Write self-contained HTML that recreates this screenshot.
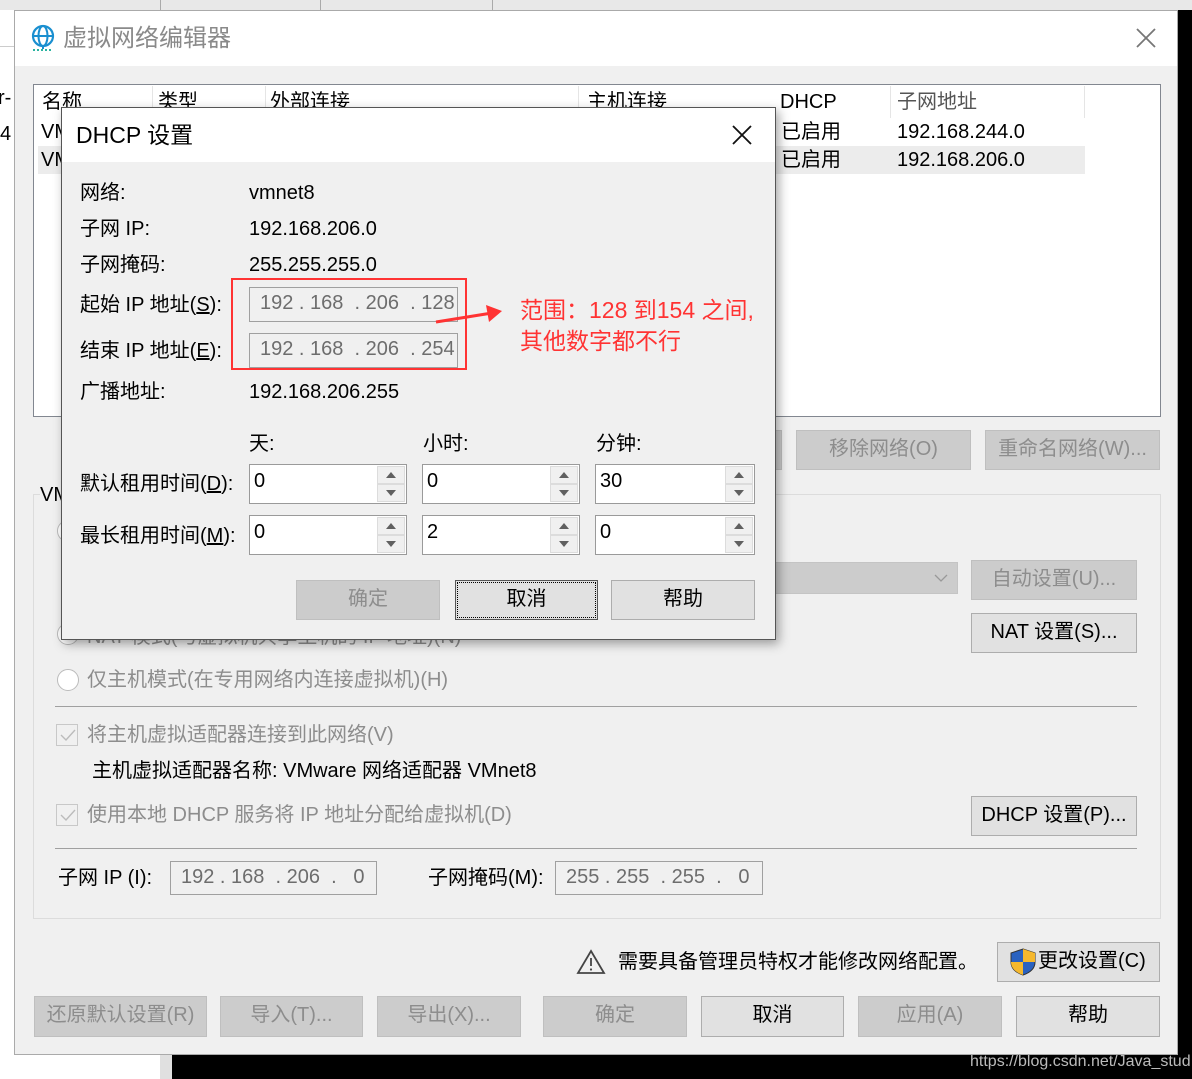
<!DOCTYPE html>
<html><head><meta charset="utf-8">
<style>
*{margin:0;padding:0;box-sizing:border-box}
body{width:1192px;height:1079px;position:relative;overflow:hidden;background:#f0f0f0;font-family:"Liberation Sans","Noto Sans CJK SC",sans-serif;font-size:20px;color:#000}
.a{position:absolute}
.t{position:absolute;line-height:24px;white-space:nowrap}
.btn{position:absolute;background:#e1e1e1;border:1px solid #adadad;text-align:center;line-height:37px;font-size:20px;white-space:nowrap}
.dis{background:#cccccc;border-color:#bfbfbf;color:#8d8d8d}
.g{color:#8d8d8d}
.ip{position:absolute;background:#f0f0f0;border:1px solid #a0a0a0;color:#6d6d6d;font-size:20px;line-height:30px;white-space:pre;padding-left:10px}
.spin{position:absolute;background:#fff;border:1px solid #9a9a9a;height:40px;width:158px}
.spin span{position:absolute;left:4px;top:4px;font-size:20px;line-height:24px}
.sb{position:absolute;right:1px;width:28px;height:18px;background:#f0f0f0;border:1px solid #dcdcdc}
.sb:before{content:"";position:absolute;left:8px;top:5px;border-left:5px solid transparent;border-right:5px solid transparent}
.up:before{border-bottom:6px solid #606060}
.dn:before{border-top:6px solid #606060}
.chk{position:absolute;width:22px;height:22px;border:1px solid #c8c8c8;background:#f0f0f0}
</style></head><body>
<div class="a" style="left:0;top:0;width:1192px;height:10px;background:#e8e8e8"></div>
<div class="a" style="left:160px;top:0;width:1px;height:10px;background:#aaa"></div>
<div class="a" style="left:320px;top:0;width:1px;height:10px;background:#aaa"></div>
<div class="a" style="left:492px;top:0;width:1px;height:10px;background:#aaa"></div>
<div class="a" style="left:0;top:10px;width:14px;height:1050px;background:#fff"></div>
<div class="a" style="left:0;top:46px;width:14px;height:1px;background:#ccc"></div>
<div class="t" style="left:-2px;top:86px;font-size:20px">r-</div>
<div class="t" style="left:0;top:122px;font-size:20px">4</div>
<div class="a" style="left:1178px;top:10px;width:14px;height:1069px;background:#000"></div>
<div class="a" style="left:0;top:1055px;width:160px;height:24px;background:#fff"></div>
<div class="a" style="left:160px;top:1055px;width:12px;height:24px;background:#e0e0e0"></div>
<div class="a" style="left:172px;top:1055px;width:1020px;height:24px;background:#000"></div>
<div class="t" style="left:970px;top:1050px;color:#bbb;font-size:16px">https://blog.csdn.net/Java_stud</div>

<div class="a" style="left:14px;top:10px;width:1164px;height:1045px;background:#f0f0f0;border:1px solid #aaa"></div>
<div class="a" style="left:15px;top:11px;width:1162px;height:55px;background:#fff"></div>
<svg class="a" style="left:30px;top:24px" width="26" height="28" viewBox="0 0 26 28"><circle cx="13" cy="12" r="10" fill="none" stroke="#1a8fd0" stroke-width="2.2"/><ellipse cx="13" cy="12" rx="4.5" ry="10" fill="none" stroke="#1a8fd0" stroke-width="2"/><line x1="3" y1="12" x2="23" y2="12" stroke="#1a8fd0" stroke-width="2"/><line x1="13" y1="22" x2="13" y2="25" stroke="#1a8fd0" stroke-width="2"/><line x1="3" y1="26" x2="23" y2="26" stroke="#2bb3a0" stroke-width="2" stroke-dasharray="2 2"/></svg>
<div class="t" style="left:63px;top:25px;font-size:24px;line-height:28px;color:#8a8a8a">虚拟网络编辑器</div>
<svg class="a" style="left:1135px;top:27px" width="22" height="22"><path d="M2 2L20 20M20 2L2 20" stroke="#777" stroke-width="1.8"/></svg>

<div class="a" style="left:33px;top:84px;width:1128px;height:333px;background:#fff;border:1px solid #828790"></div>
<div class="a" style="left:152px;top:86px;width:1px;height:32px;background:#e5e5e5"></div>
<div class="a" style="left:265px;top:86px;width:1px;height:32px;background:#e5e5e5"></div>
<div class="a" style="left:578px;top:86px;width:1px;height:32px;background:#e5e5e5"></div>
<div class="a" style="left:890px;top:86px;width:1px;height:32px;background:#e5e5e5"></div>
<div class="a" style="left:1084px;top:86px;width:1px;height:32px;background:#e5e5e5"></div>
<div class="t" style="left:42px;top:90px">名称</div>
<div class="t" style="left:158px;top:90px">类型</div>
<div class="t" style="left:270px;top:90px">外部连接</div>
<div class="t" style="left:587px;top:90px">主机连接</div>
<div class="t" style="left:780px;top:90px">DHCP</div>
<div class="t" style="left:897px;top:90px;color:#555">子网地址</div>
<div class="a" style="left:38px;top:146px;width:1047px;height:28px;background:#ececec"></div>
<div class="t" style="left:41px;top:120px">VM</div>
<div class="t" style="left:41px;top:148px">VM</div>
<div class="t" style="left:781px;top:120px">已启用</div>
<div class="t" style="left:897px;top:120px">192.168.244.0</div>
<div class="t" style="left:781px;top:148px">已启用</div>
<div class="t" style="left:897px;top:148px">192.168.206.0</div>

<div class="btn dis" style="left:700px;top:430px;width:82px;height:40px"></div>
<div class="btn dis" style="left:796px;top:430px;width:175px;height:40px">移除网络(O)</div>
<div class="btn dis" style="left:985px;top:430px;width:175px;height:40px">重命名网络(W)...</div>

<div class="a" style="left:33px;top:494px;width:1128px;height:425px;border:1px solid #dcdcdc"></div>
<div class="t" style="left:40px;top:483px;background:#f0f0f0">VM</div>
<div class="a" style="left:57px;top:520px;width:22px;height:22px;border-radius:50%;border:1px solid #bbb;background:#fff"></div>
<div class="a" style="left:700px;top:562px;width:258px;height:32px;background:#cccccc;border:1px solid #c4c4c4"></div>
<svg class="a" style="left:934px;top:573px" width="14" height="10"><path d="M1 2L7 8L13 2" fill="none" stroke="#999" stroke-width="1.3"/></svg>
<div class="btn dis" style="left:971px;top:560px;width:166px;height:40px">自动设置(U)...</div>
<div class="btn" style="left:971px;top:613px;width:166px;height:40px">NAT 设置(S)...</div>
<div class="a" style="left:57px;top:623px;width:22px;height:22px;border-radius:50%;border:1px solid #bbb;background:#fff"></div>
<div class="t g" style="left:87px;top:625px">NAT 模式(与虚拟机共享主机的 IP 地址)(N)</div>
<div class="a" style="left:57px;top:669px;width:22px;height:22px;border-radius:50%;border:1px solid #bbb;background:#fff"></div>
<div class="t g" style="left:87px;top:668px">仅主机模式(在专用网络内连接虚拟机)(H)</div>
<div class="a" style="left:55px;top:706px;width:1082px;height:1px;background:#a0a0a0"></div>
<div class="chk" style="left:56px;top:724px"></div>
<svg class="a" style="left:59px;top:727px" width="18" height="16"><path d="M2 8L7 13L16 3" fill="none" stroke="#bbb" stroke-width="1.4"/></svg>
<div class="t g" style="left:87px;top:723px">将主机虚拟适配器连接到此网络(V)</div>
<div class="t" style="left:92px;top:759px">主机虚拟适配器名称: VMware 网络适配器 VMnet8</div>
<div class="chk" style="left:56px;top:804px"></div>
<svg class="a" style="left:59px;top:807px" width="18" height="16"><path d="M2 8L7 13L16 3" fill="none" stroke="#bbb" stroke-width="1.4"/></svg>
<div class="t g" style="left:87px;top:803px">使用本地 DHCP 服务将 IP 地址分配给虚拟机(D)</div>
<div class="btn" style="left:971px;top:796px;width:166px;height:40px">DHCP 设置(P)...</div>
<div class="a" style="left:55px;top:848px;width:1082px;height:1px;background:#a0a0a0"></div>
<div class="t" style="left:58px;top:866px">子网 IP (I):</div>
<div class="ip" style="left:170px;top:861px;width:207px;height:34px">192 . 168  . 206  .   0</div>
<div class="t" style="left:428px;top:866px">子网掩码(M):</div>
<div class="ip" style="left:555px;top:861px;width:208px;height:34px">255 . 255  . 255  .   0</div>

<svg class="a" style="left:576px;top:949px" width="30" height="26"><path d="M15 2L28 24H2Z" fill="none" stroke="#444" stroke-width="1.8"/><line x1="15" y1="9" x2="15" y2="17" stroke="#444" stroke-width="1.8"/><circle cx="15" cy="20.5" r="1.1" fill="#444"/></svg>
<div class="t" style="left:618px;top:950px">需要具备管理员特权才能修改网络配置。</div>
<div class="btn" style="left:997px;top:942px;width:163px;height:40px;text-align:left;padding-left:40px">更改设置(C)</div>
<svg class="a" style="left:1008px;top:947px" width="30" height="30" viewBox="0 0 30 30"><path d="M15 2L27 6V15C27 22 21 26 15 28C9 26 3 22 3 15V6Z" fill="#2a62c0" stroke="#333" stroke-width="1"/><path d="M15 2L27 6V15H15Z" fill="#f5b82e"/><path d="M15 15H3C3 22 9 26 15 28Z" fill="#f5b82e"/></svg>

<div class="btn dis" style="left:34px;top:996px;width:173px;height:41px">还原默认设置(R)</div>
<div class="btn dis" style="left:220px;top:996px;width:143px;height:41px">导入(T)...</div>
<div class="btn dis" style="left:377px;top:996px;width:144px;height:41px">导出(X)...</div>
<div class="btn dis" style="left:543px;top:996px;width:144px;height:41px">确定</div>
<div class="btn" style="left:701px;top:996px;width:143px;height:41px">取消</div>
<div class="btn dis" style="left:858px;top:996px;width:144px;height:41px">应用(A)</div>
<div class="btn" style="left:1016px;top:996px;width:144px;height:41px">帮助</div>

<div class="a" style="left:61px;top:107px;width:715px;height:533px;background:#f0f0f0;border:1px solid #555;box-shadow:3px 4px 10px rgba(0,0,0,.35)"></div>
<div class="a" style="left:62px;top:108px;width:713px;height:54px;background:#fff"></div>
<div class="t" style="left:76px;top:120px;font-size:23px;line-height:30px">DHCP 设置</div>
<svg class="a" style="left:731px;top:124px" width="22" height="22"><path d="M2 2L20 20M20 2L2 20" stroke="#111" stroke-width="1.8"/></svg>
<div class="t" style="left:80px;top:181px">网络:</div>
<div class="t" style="left:249px;top:181px">vmnet8</div>
<div class="t" style="left:80px;top:217px">子网 IP:</div>
<div class="t" style="left:249px;top:217px">192.168.206.0</div>
<div class="t" style="left:80px;top:253px">子网掩码:</div>
<div class="t" style="left:249px;top:253px">255.255.255.0</div>
<div class="t" style="left:80px;top:293px">起始 IP 地址(<u>S</u>):</div>
<div class="t" style="left:80px;top:339px">结束 IP 地址(<u>E</u>):</div>
<div class="ip" style="left:249px;top:287px;width:209px;height:35px">192 . 168  . 206  . 128</div>
<div class="ip" style="left:249px;top:333px;width:209px;height:35px">192 . 168  . 206  . 254</div>
<div class="a" style="left:231px;top:278px;width:236px;height:92px;border:2px solid #f33"></div>
<svg class="a" style="left:430px;top:300px" width="80" height="30"><path d="M6 22L62 13" stroke="#f33" stroke-width="3"/><path d="M56 5L72 11L59 22Z" fill="#f33"/></svg>
<div class="t" style="left:520px;top:296px;color:#f33;font-size:23px;line-height:28px">范围：128 到154 之间,</div>
<div class="t" style="left:520px;top:327px;color:#f33;font-size:23px;line-height:28px">其他数字都不行</div>
<div class="t" style="left:80px;top:380px">广播地址:</div>
<div class="t" style="left:249px;top:380px">192.168.206.255</div>

<div class="t" style="left:249px;top:432px">天:</div>
<div class="t" style="left:423px;top:432px">小时:</div>
<div class="t" style="left:596px;top:432px">分钟:</div>
<div class="t" style="left:80px;top:472px">默认租用时间(<u>D</u>):</div>
<div class="t" style="left:80px;top:524px">最长租用时间(<u>M</u>):</div>
<div class="spin" style="left:249px;top:464px"><span>0</span><div class="sb up" style="top:1px"></div><div class="sb dn" style="top:19px"></div></div>
<div class="spin" style="left:422px;top:464px"><span>0</span><div class="sb up" style="top:1px"></div><div class="sb dn" style="top:19px"></div></div>
<div class="spin" style="left:595px;top:464px;width:160px"><span>30</span><div class="sb up" style="top:1px"></div><div class="sb dn" style="top:19px"></div></div>
<div class="spin" style="left:249px;top:515px"><span>0</span><div class="sb up" style="top:1px"></div><div class="sb dn" style="top:19px"></div></div>
<div class="spin" style="left:422px;top:515px"><span>2</span><div class="sb up" style="top:1px"></div><div class="sb dn" style="top:19px"></div></div>
<div class="spin" style="left:595px;top:515px;width:160px"><span>0</span><div class="sb up" style="top:1px"></div><div class="sb dn" style="top:19px"></div></div>

<div class="btn dis" style="left:296px;top:580px;width:144px;height:40px">确定</div>
<div class="btn" style="left:455px;top:580px;width:143px;height:40px;outline:1px dotted #000;outline-offset:-3px;border-color:#555">取消</div>
<div class="btn" style="left:611px;top:580px;width:144px;height:40px">帮助</div>
</body></html>
